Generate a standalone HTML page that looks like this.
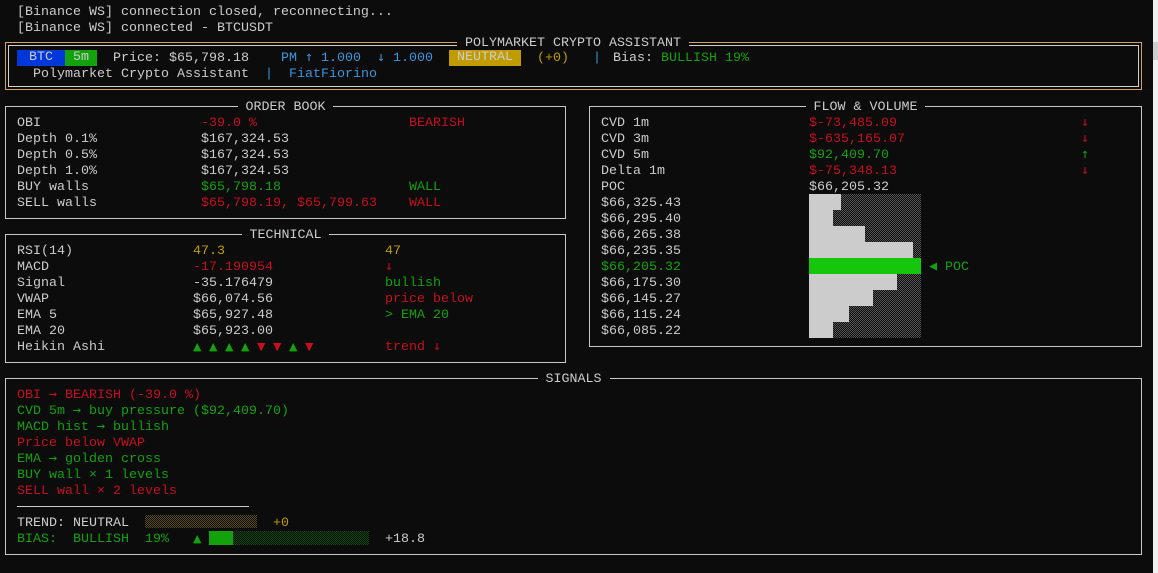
<!DOCTYPE html><html><head><meta charset="utf-8"><style>
*{margin:0;padding:0;box-sizing:border-box}
body{width:1158px;height:573px;background:#0c0c0c;overflow:hidden;position:relative;font-family:"Liberation Mono","DejaVu Sans Mono",monospace;font-size:13.33px;line-height:16px;color:#cccccc}
.t{position:absolute;white-space:pre;height:16px;transform:translateY(2px)}
.box{position:absolute;border:1px solid #c8c8c8}
.ttl{position:absolute;top:-7px;left:0;right:0;text-align:center;line-height:16px}
.ttl span{background:#0c0c0c;padding:0 8px;white-space:pre}
.r{color:#c50f1f}.g{color:#13a10e}.y{color:#c19c00}.b{color:#3a96dd}.w{color:#cccccc}
.a{font-family:"DejaVu Sans Mono",monospace;font-size:13.33px;line-height:0}
.dot{position:absolute;background:repeating-conic-gradient(#555 0 25%,#0c0c0c 0 50%) 0 0/2px 2px}
.lt{position:absolute;background:#cccccc}
.tri{position:absolute;font-family:'DejaVu Sans',sans-serif;font-size:11px;line-height:16px;top:0}
</style></head><body>
<div class="t" style="left:17px;top:3px">[Binance WS] connection closed, reconnecting...</div>
<div class="t" style="left:17px;top:19px">[Binance WS] connected - BTCUSDT</div>

<div style="position:absolute;left:5px;top:42px;width:1137px;height:48px;border:1px solid #d8a060"></div>
<div style="position:absolute;left:8px;top:45px;width:1131px;height:42px;border:1px solid #d0d0d0"></div>
<div class="t" style="left:457px;top:34px;background:#0c0c0c;padding:0 8px">POLYMARKET CRYPTO ASSISTANT</div>
<div class="t" style="left:17px;top:48px;width:48px;background:#0037da;text-align:center">BTC</div>
<div class="t" style="left:65px;top:48px;width:32px;background:#13a10e;text-align:center">5m</div>
<div class="t" style="left:113px;top:49px">Price: $65,798.18</div>
<div class="t b" style="left:281px;top:49px">PM <span class="a">↑</span> 1.000  <span class="a">↓</span> 1.000</div>
<div class="t" style="left:449px;top:48px;width:72px;background:#c19c00;text-align:center">NEUTRAL</div>
<div class="t y" style="left:537px;top:49px">(+0)</div>
<div class="t b" style="left:593px;top:49px">|</div>
<div class="t" style="left:613px;top:49px">Bias: <span class="g">BULLISH 19%</span></div>
<div class="t" style="left:33px;top:65px">Polymarket Crypto Assistant</div>
<div class="t b" style="left:265px;top:65px">|</div>
<div class="t b" style="left:289px;top:65px">FiatFiorino</div>

<div class="box" style="left:5px;top:106px;width:561px;height:113px"><div class="ttl"><span>ORDER BOOK</span></div></div>
<div class="t" style="left:17px;top:114px">OBI</div><div class="t r" style="left:201px;top:114px">-39.0 %</div><div class="t r" style="left:409px;top:114px">BEARISH</div>
<div class="t" style="left:17px;top:130px">Depth 0.1%</div><div class="t" style="left:201px;top:130px">$167,324.53</div>
<div class="t" style="left:17px;top:146px">Depth 0.5%</div><div class="t" style="left:201px;top:146px">$167,324.53</div>
<div class="t" style="left:17px;top:162px">Depth 1.0%</div><div class="t" style="left:201px;top:162px">$167,324.53</div>
<div class="t" style="left:17px;top:178px">BUY walls</div><div class="t g" style="left:201px;top:178px">$65,798.18</div><div class="t g" style="left:409px;top:178px">WALL</div>
<div class="t" style="left:17px;top:194px">SELL walls</div><div class="t r" style="left:201px;top:194px">$65,798.19, $65,799.63</div><div class="t r" style="left:409px;top:194px">WALL</div>

<div class="box" style="left:5px;top:234px;width:561px;height:129px"><div class="ttl"><span>TECHNICAL</span></div></div>
<div class="t" style="left:17px;top:242px">RSI(14)</div><div class="t y" style="left:193px;top:242px">47.3</div><div class="t y" style="left:385px;top:242px">47</div>
<div class="t" style="left:17px;top:258px">MACD</div><div class="t r" style="left:193px;top:258px">-17.190954</div><div class="t r" style="left:385px;top:258px"><span class="a">↓</span></div>
<div class="t" style="left:17px;top:274px">Signal</div><div class="t" style="left:193px;top:274px">-35.176479</div><div class="t g" style="left:385px;top:274px">bullish</div>
<div class="t" style="left:17px;top:290px">VWAP</div><div class="t" style="left:193px;top:290px">$66,074.56</div><div class="t r" style="left:385px;top:290px">price below</div>
<div class="t" style="left:17px;top:306px">EMA 5</div><div class="t" style="left:193px;top:306px">$65,927.48</div><div class="t g" style="left:385px;top:306px">&gt; EMA 20</div>
<div class="t" style="left:17px;top:322px">EMA 20</div><div class="t" style="left:193px;top:322px">$65,923.00</div>
<div class="t" style="left:17px;top:338px">Heikin Ashi</div>
<div class="t" style="left:193px;top:337px"><span class="tri g" style="left:0">▲</span><span class="tri g" style="left:16px">▲</span><span class="tri g" style="left:32px">▲</span><span class="tri g" style="left:48px">▲</span><span class="tri r" style="left:64px">▼</span><span class="tri r" style="left:80px">▼</span><span class="tri g" style="left:96px">▲</span><span class="tri r" style="left:112px">▼</span></div>
<div class="t r" style="left:385px;top:338px">trend <span class="a">↓</span></div>

<div class="box" style="left:589px;top:106px;width:553px;height:241px"><div class="ttl"><span>FLOW &amp; VOLUME</span></div></div>
<div class="t" style="left:601px;top:114px">CVD 1m</div><div class="t r" style="left:809px;top:114px">$-73,485.09</div><div class="t r" style="left:1081px;top:114px"><span class="a">↓</span></div>
<div class="t" style="left:601px;top:130px">CVD 3m</div><div class="t r" style="left:809px;top:130px">$-635,165.07</div><div class="t r" style="left:1081px;top:130px"><span class="a">↓</span></div>
<div class="t" style="left:601px;top:146px">CVD 5m</div><div class="t g" style="left:809px;top:146px">$92,409.70</div><div class="t g" style="left:1081px;top:146px"><span class="a">↑</span></div>
<div class="t" style="left:601px;top:162px">Delta 1m</div><div class="t r" style="left:809px;top:162px">$-75,348.13</div><div class="t r" style="left:1081px;top:162px"><span class="a">↓</span></div>
<div class="t" style="left:601px;top:178px">POC</div><div class="t" style="left:809px;top:178px">$66,205.32</div>
<div class="t" style="left:601px;top:194px">$66,325.43</div>
<div class="t" style="left:601px;top:210px">$66,295.40</div>
<div class="t" style="left:601px;top:226px">$66,265.38</div>
<div class="t" style="left:601px;top:242px">$66,235.35</div>
<div class="t g" style="left:601px;top:258px">$66,205.32</div>
<div class="t" style="left:601px;top:274px">$66,175.30</div>
<div class="t" style="left:601px;top:290px">$66,145.27</div>
<div class="t" style="left:601px;top:306px">$66,115.24</div>
<div class="t" style="left:601px;top:322px">$66,085.22</div>
<div class="dot" style="left:809px;top:194px;width:112px;height:144px"></div>
<div class="lt" style="left:809px;top:194px;width:32px;height:16px"></div>
<div class="lt" style="left:809px;top:210px;width:24px;height:16px"></div>
<div class="lt" style="left:809px;top:226px;width:56px;height:16px"></div>
<div class="lt" style="left:809px;top:242px;width:104px;height:16px"></div>
<div class="lt" style="left:809px;top:258px;width:112px;height:16px;background:#16c60c"></div>
<div class="lt" style="left:809px;top:274px;width:88px;height:16px"></div>
<div class="lt" style="left:809px;top:290px;width:64px;height:16px"></div>
<div class="lt" style="left:809px;top:306px;width:40px;height:16px"></div>
<div class="lt" style="left:809px;top:322px;width:24px;height:16px"></div>
<div class="t g" style="left:929px;top:258px">◀ POC</div>

<div class="box" style="left:5px;top:378px;width:1137px;height:177px"><div class="ttl"><span>SIGNALS</span></div></div>
<div class="t r" style="left:17px;top:386px">OBI <span class="a">→</span> BEARISH (-39.0 %)</div>
<div class="t g" style="left:17px;top:402px">CVD 5m <span class="a">→</span> buy pressure ($92,409.70)</div>
<div class="t g" style="left:17px;top:418px">MACD hist <span class="a">→</span> bullish</div>
<div class="t r" style="left:17px;top:434px">Price below VWAP</div>
<div class="t g" style="left:17px;top:450px">EMA <span class="a">→</span> golden cross</div>
<div class="t g" style="left:17px;top:466px">BUY wall × 1 levels</div>
<div class="t r" style="left:17px;top:482px">SELL wall × 2 levels</div>
<div style="position:absolute;left:17px;top:506px;width:232px;height:1px;background:#cccccc"></div>
<div class="t" style="left:17px;top:514px">TREND: NEUTRAL</div>
<div class="dot" style="left:145px;top:515px;width:112px;height:13px;background:repeating-conic-gradient(#5a4c18 0 25%,#0c0c0c 0 50%) 0 0/2px 2px"></div>
<div class="t y" style="left:273px;top:514px">+0</div>
<div class="t g" style="left:17px;top:530px">BIAS:  BULLISH  19%</div>
<div class="t" style="left:193px;top:529px"><span class="tri g" style="left:0">▲</span></div>
<div class="dot" style="left:209px;top:531px;width:160px;height:14px;background:repeating-conic-gradient(#0d4a0a 0 25%,#0c0c0c 0 50%) 0 0/2px 2px"></div>
<div style="position:absolute;left:209px;top:531px;width:24px;height:14px;background:#13a10e"></div>
<div class="t" style="left:385px;top:530px">+18.8</div>

<div style="position:absolute;left:1153px;top:0;width:5px;height:573px;background:#f0f0f0"></div>
<div style="position:absolute;left:1153px;top:42px;width:5px;height:18px;background:#cdcdcd"></div>
</body></html>
